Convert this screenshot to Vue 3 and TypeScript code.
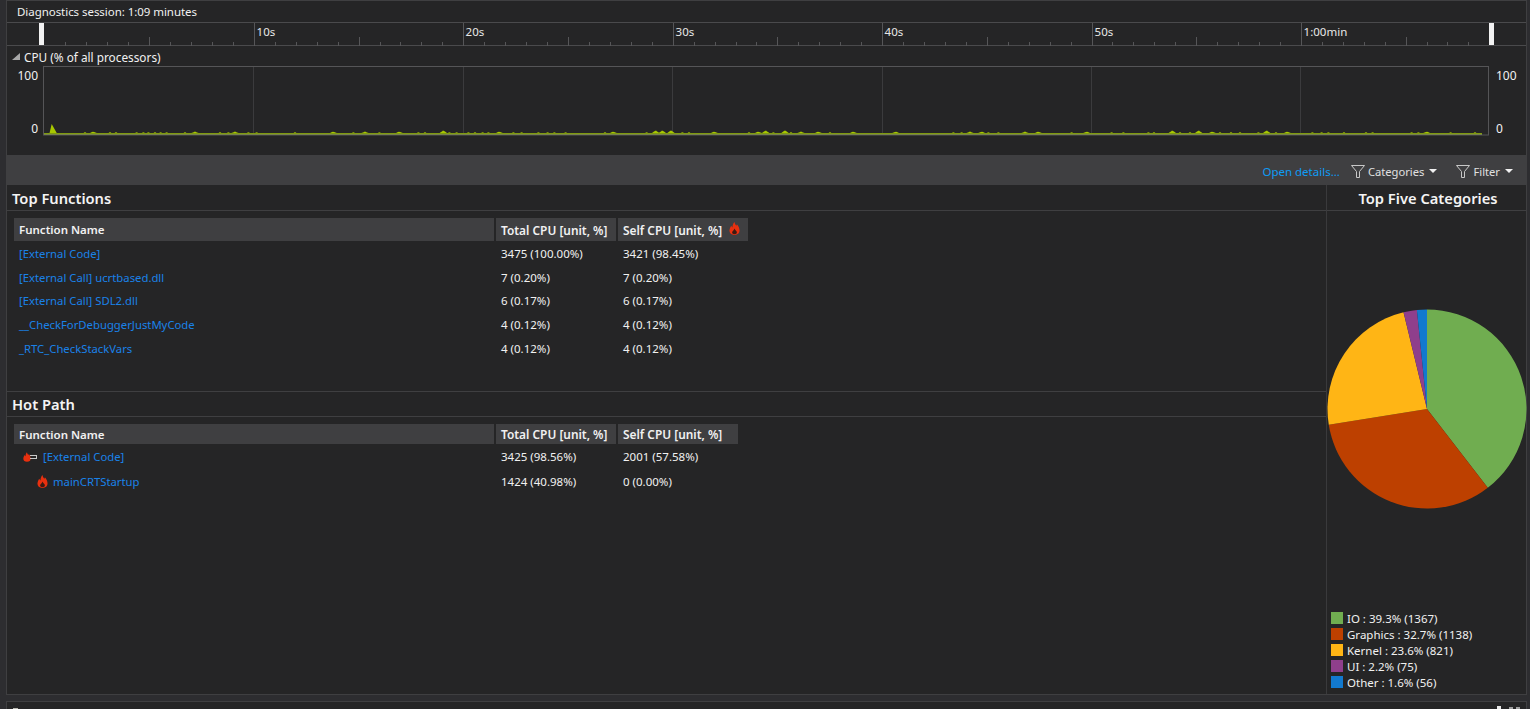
<script setup lang="ts">
const TICK = 20.94
const X0 = 37.5 // 0s on the ruler, relative to the panel
const PLOT_X = 43

const timeLabels = [
  { at: 10, text: '10s' },
  { at: 20, text: '20s' },
  { at: 30, text: '30s' },
  { at: 40, text: '40s' },
  { at: 50, text: '50s' },
  { at: 60, text: '1:00min' },
]

let tickPath = ''
for (let s = 1; s < 69; s++) {
  const x = Math.round(X0 + s * TICK) + 0.5
  const top = s % 10 === 0 ? 0 : s % 5 === 0 ? 14 : 19
  tickPath += `M${x} ${top}V23`
}

const gridX = [10, 20, 30, 40, 50, 60].map((s) => Math.round(s * TICK) + 1.5)

// activity bumps along the baseline: [position, half width, height]
type Bump = [number, number, number]
const bumps: Bump[] = []
function strip(offset: number, small: number[], wide: number[], tall: number[]) {
  small.forEach((v) => bumps.push([offset + v / 3 - PLOT_X, 3, 2]))
  wide.forEach((v) => bumps.push([offset + v / 3 - PLOT_X, 6, 2.4]))
  tall.forEach((v) => bumps.push([offset + v / 3 - PLOT_X, 5, 3.6]))
}
strip(
  40,
  [135, 210, 228, 290, 310, 325, 345, 362, 380, 435, 540, 565, 625, 650, 765, 940, 1018, 1135, 1155, 1228, 1250, 1285, 1305, 1328, 1345, 1420, 1445],
  [160, 465, 585, 880, 975, 1078, 1378],
  [1210],
)
strip(
  525,
  [40, 68, 88, 122, 240, 365, 472, 492, 672, 745, 798, 915, 1285, 1310, 1390, 1420],
  [265, 568, 700, 828, 880, 985, 1112, 1335, 1370],
  [392, 412, 438, 722, 780],
)
strip(
  1010,
  [185, 305, 340, 415, 432, 510, 540, 630, 663, 690, 745, 798, 907, 935, 955, 1002, 1068, 1088, 1205, 1225, 1322, 1395],
  [45, 85, 230, 607, 832, 1250],
  [487, 566, 770],
)

let area = 'M5 68.5L6.3 68L8.7 58L14.3 68'
for (let x = 15; x < 1439; x++) {
  let h = 0
  for (const [at, half, height] of bumps) {
    h = Math.max(h, height * (1 - Math.abs(x - at) / half))
  }
  area += `L${x} ${(68 - h).toFixed(1)}`
}
area += 'L1439 68.5Z'

const topFunctions = [
  { name: '[External Code]', total: '3475 (100.00%)', self: '3421 (98.45%)' },
  { name: '[External Call] ucrtbased.dll', total: '7 (0.20%)', self: '7 (0.20%)' },
  { name: '[External Call] SDL2.dll', total: '6 (0.17%)', self: '6 (0.17%)' },
  { name: '__CheckForDebuggerJustMyCode', total: '4 (0.12%)', self: '4 (0.12%)' },
  { name: '_RTC_CheckStackVars', total: '4 (0.12%)', self: '4 (0.12%)' },
]

const categories = [
  { label: 'IO : 39.3% (1367)', count: 1367, color: '#70ad50' },
  { label: 'Graphics : 32.7% (1138)', count: 1138, color: '#bd4000' },
  { label: 'Kernel : 23.6% (821)', count: 821, color: '#ffb515' },
  { label: 'UI : 2.2% (75)', count: 75, color: '#8f3f8c' },
  { label: 'Other : 1.6% (56)', count: 56, color: '#1279cf' },
]

const total = categories.reduce((sum, c) => sum + c.count, 0)
let running = 0
const slices = categories.map((c) => {
  const a0 = (running / total) * Math.PI * 2
  running += c.count
  const a1 = (running / total) * Math.PI * 2
  const large = a1 - a0 > Math.PI ? 1 : 0
  const r = 99.5
  const d = `M100 100L${100 + r * Math.sin(a0)} ${100 - r * Math.cos(a0)}A${r} ${r} 0 ${large} 1 ${100 + r * Math.sin(a1)} ${100 - r * Math.cos(a1)}Z`
  return { d, color: c.color }
})

const flameOuter = 'M6 0C6.3 2 7.2 3 8 4C8.4 3.6 8.6 3 8.6 2.4C10.5 4.5 11.5 7 11.5 9.5C11.5 12 9.5 14 6 14C2.5 14 0.5 12 0.5 9.5C0.5 7.5 1.5 5.5 2.5 4C2.8 5 3.2 5.6 3.8 6C3.8 3.5 4.6 1.5 6 0Z'
const flameInner = 'M6 7C6.3 8.5 8.6 9.5 8.6 11.4C8.6 12.6 7.4 13.2 6 13.2C4.6 13.2 3.4 12.6 3.4 11.4C3.4 10 5.4 9 6 7Z'
</script>

<template>
  <div class="page">
    <div class="panel">
      <div class="session">Diagnostics session: 1:09 minutes</div>

      <div class="ruler">
        <svg class="ruler-svg" width="1519" height="23">
          <path :d="tickPath" stroke="#565658" fill="none" />
          <rect x="32" y="0" width="5" height="22" fill="#f2f2f2" />
          <rect x="1482" y="0" width="5" height="22" fill="#f2f2f2" />
          <text
            v-for="t in timeLabels"
            :key="t.at"
            class="ruler-text"
            :x="Math.round(X0 + t.at * TICK) + 2.6"
            y="13"
          >{{ t.text }}</text>
        </svg>
      </div>

      <div class="cpu-title">
        <span class="caret"></span>
        CPU (% of all processors)
      </div>

      <div class="cpu-chart">
        <div class="axis axis--left"><span>100</span><span>0</span></div>
        <svg class="plot" width="1447" height="70">
          <rect x="0.5" y="0.5" width="1445" height="68.5" fill="none" stroke="#555557" />
          <path
            v-for="x in gridX"
            :key="x"
            :d="`M${x} 1V68`"
            stroke="#3b3b3d"
          />
          <path :d="area" fill="#a8c800" />
          <path d="M1 67.5H1439" stroke="#7f9a10" />
          <path d="M1 68.5H1439" stroke="#77834a" />
        </svg>
        <div class="axis axis--right"><span>100</span><span>0</span></div>
      </div>

      <div class="toolbar">
        <a class="open-details">Open details...</a>
        <span class="tool">
          <svg width="14" height="13" viewBox="0 0 14 13"><path d="M0.5 0.5H13.5L8.5 6.5V12.5H5.5V6.5Z" fill="none" stroke="#c8c8c8" /></svg>
          Categories
          <span class="drop"></span>
        </span>
        <span class="tool tool--filter">
          <svg width="14" height="13" viewBox="0 0 14 13"><path d="M0.5 0.5H13.5L8.5 6.5V12.5H5.5V6.5Z" fill="none" stroke="#c8c8c8" /></svg>
          Filter
          <span class="drop"></span>
        </span>
      </div>

      <div class="content">
        <div class="left">
          <section class="top-functions">
            <h2 class="heading heading--tall">Top Functions</h2>
            <div class="table">
              <div class="row row--head">
                <div class="cell">Function Name</div>
                <div class="cell">Total CPU [unit, %]</div>
                <div class="cell cell--self">
                  Self CPU [unit, %]
                  <svg class="flame-head" width="11" height="13" viewBox="0 0 12 14"><path :d="flameOuter" fill="#e8300f" /><path :d="flameInner" fill="#3a1a12" /></svg>
                </div>
              </div>
              <div v-for="f in topFunctions" :key="f.name" class="row">
                <div class="cell cell--link">{{ f.name }}</div>
                <div class="cell">{{ f.total }}</div>
                <div class="cell">{{ f.self }}</div>
              </div>
            </div>
          </section>

          <section class="hot-path">
            <h2 class="heading">Hot Path</h2>
            <div class="table table--hot">
              <div class="row row--head">
                <div class="cell">Function Name</div>
                <div class="cell">Total CPU [unit, %]</div>
                <div class="cell">Self CPU [unit, %]</div>
              </div>
              <div class="row row--hot">
                <div class="cell cell--link cell--tree">
                  <svg width="8" height="10" viewBox="0 0 12 14"><path :d="flameOuter" fill="#e8300f" /></svg>
                  <span class="collapse"></span>
                  [External Code]
                </div>
                <div class="cell">3425 (98.56%)</div>
                <div class="cell">2001 (57.58%)</div>
              </div>
              <div class="row row--hot">
                <div class="cell cell--link cell--tree cell--child">
                  <svg width="11" height="13" viewBox="0 0 12 14"><path :d="flameOuter" fill="#e8300f" /><path :d="flameInner" fill="#3a1a12" /></svg>
                  mainCRTStartup
                </div>
                <div class="cell">1424 (40.98%)</div>
                <div class="cell">0 (0.00%)</div>
              </div>
            </div>
          </section>
        </div>

        <aside class="right">
          <h2 class="heading heading--tall heading--center">Top Five Categories</h2>
          <svg class="pie" width="200" height="200" viewBox="0 0 200 200">
            <path v-for="s in slices" :key="s.color" :d="s.d" :fill="s.color" />
          </svg>
          <ul class="legend">
            <li v-for="c in categories" :key="c.label">
              <span class="swatch" :style="{ background: c.color }"></span>
              {{ c.label }}
            </li>
          </ul>
        </aside>
      </div>
    </div>
    <div class="next-panel">
      <span class="next-mark"></span>
      <span class="next-tools">
        <i class="pin"></i>
        <i class="btn"></i>
        <i class="btn"></i>
      </span>
    </div>
  </div>
</template>

<style>
html, body {
  margin: 0;
  background: #2d2d30;
  overflow: hidden;
}
</style>

<style scoped>
.page {
  width: 1530px;
  height: 709px;
  padding-left: 6px;
  padding-right: 3px;
  box-sizing: border-box;
  background: #2d2d30;
  font-family: "Noto Sans", "Open Sans", sans-serif;
  font-size: 11.5px;
  color: #f1f1f1;
  overflow: hidden;
}

.panel {
  width: 1521px;
  height: 695px;
  box-sizing: border-box;
  background: #252526;
  border: 1px solid #3f3f41;
  display: flex;
  flex-direction: column;
}

.session {
  height: 21px;
  line-height: 21px;
  padding-left: 10px;
  letter-spacing: -0.05px;
}

.ruler {
  height: 24px;
  box-sizing: border-box;
  border-top: 1px solid #4a4a4c;
  border-bottom: 1px solid #4a4a4c;
}

.ruler-svg {
  display: block;
}

.ruler-text {
  fill: #e8e8e8;
  font-size: 11.5px;
}

.cpu-title {
  height: 20px;
  box-sizing: border-box;
  padding: 2px 0 0 5px;
  display: flex;
  align-items: center;
  gap: 4px;
  font-size: 11.8px;
}

.caret {
  width: 0;
  height: 0;
  margin-top: -2px;
  border-style: solid;
  border-width: 0 0 7px 8px;
  border-color: transparent transparent #a8a8a8 transparent;
}

.cpu-chart {
  height: 89px;
  display: flex;
}

.plot {
  display: block;
}

.axis {
  height: 70px;
  display: flex;
  flex-direction: column;
  justify-content: space-between;
  padding: 2px 0 0;
  box-sizing: border-box;
  width: 36px;
  line-height: 16px;
  font-size: 12px;
}

.axis--left {
  text-align: right;
  padding-right: 5px;
}

.axis--right {
  padding-left: 6px;
}

.axis span:last-child {
  margin-bottom: -1px;
}

.toolbar {
  height: 30px;
  flex: none;
  box-sizing: border-box;
  padding: 2px 13px 0 0;
  background: #3f3f41;
  display: flex;
  align-items: center;
  justify-content: flex-end;
  gap: 11px;
}

.open-details {
  color: #0e9cf5;
}

.tool {
  display: flex;
  align-items: center;
  gap: 3px;
  color: #e0e0e0;
  font-size: 11.2px;
}

.tool--filter {
  margin-left: 8px;
}

.drop {
  width: 0;
  height: 0;
  margin-left: 2px;
  border-left: 4px solid transparent;
  border-right: 4px solid transparent;
  border-top: 4px solid #f1f1f1;
}

.content {
  flex: 1;
  min-height: 0;
  display: flex;
}

.left {
  width: 1319px;
  flex: none;
  display: flex;
  flex-direction: column;
}

.top-functions {
  height: 207px;
  box-sizing: border-box;
  border-bottom: 1px solid #3f3f41;
}

.heading {
  margin: 0;
  height: 25px;
  line-height: 25px;
  box-sizing: border-box;
  border-bottom: 1px solid #3f3f41;
  padding-left: 5px;
  font-size: 14.7px;
  font-weight: 600;
  color: #f4f4f4;
}

.heading--tall {
  height: 26px;
  line-height: 27px;
}

.heading--center {
  padding-left: 3px;
  text-align: center;
}

.table {
  margin: 7px 0 0 7px;
}

.row {
  display: grid;
  grid-template-columns: 480px 120px 130px;
  column-gap: 2px;
  height: 23.7px;
  align-items: center;
}

.row--head {
  height: 23px;
  margin-bottom: 0.6px;
  font-weight: 600;
}

.row--head .cell {
  background: #3f3f41;
  height: 100%;
  display: flex;
  align-items: center;
}

.row--head .cell + .cell {
  font-size: 11.9px;
}

.table--hot .row {
  grid-template-columns: 480px 120px 120px;
}

.table--hot .row--head {
  height: 20px;
  margin-bottom: 0;
}

.table--hot .row--hot {
  height: 25px;
}

.cell {
  padding-left: 5px;
  white-space: nowrap;
}

.cell--link {
  color: #1a82e8;
  font-size: 11.3px;
}

.cell--self {
  gap: 7px;
}

.flame-head {
  margin-top: -2px;
}

.cell--tree {
  display: flex;
  align-items: center;
  gap: 0;
  padding-left: 9px;
}

.cell--child {
  padding-left: 23px;
  gap: 5px;
}

.collapse {
  width: 6px;
  height: 2px;
  border: 1px solid #c8c8c8;
  border-left: 0;
  margin: 0 6px 0 -1px;
}

.right {
  flex: 1;
  min-width: 0;
  border-left: 1px solid #3a3a3c;
  display: flex;
  flex-direction: column;
}

.pie {
  display: block;
  margin-top: 98px;
  flex: none;
}

.legend {
  list-style: none;
  margin: auto 0 4px;
  padding: 0 0 0 4px;
}

.legend li {
  height: 16px;
  display: flex;
  align-items: center;
  gap: 4px;
}

.swatch {
  width: 12px;
  height: 12px;
  flex: none;
}

.next-panel {
  margin-top: 6px;
  height: 20px;
  width: 1521px;
  box-sizing: border-box;
  border: 1px solid #3f3f41;
  background: #252526;
  display: flex;
  justify-content: space-between;
  padding: 6px 6px 0 6px;
}

.next-mark {
  width: 5px;
  height: 6px;
  background: #b8b8b0;
}

.next-tools {
  display: flex;
  gap: 3px;
  margin-top: -2px;
}

.pin {
  width: 4px;
  height: 6px;
  margin-right: 5px;
  background: #e8e8e8;
}

.btn {
  width: 4px;
  height: 2px;
  margin-top: 1px;
  background: #a0a0a0;
}
</style>
